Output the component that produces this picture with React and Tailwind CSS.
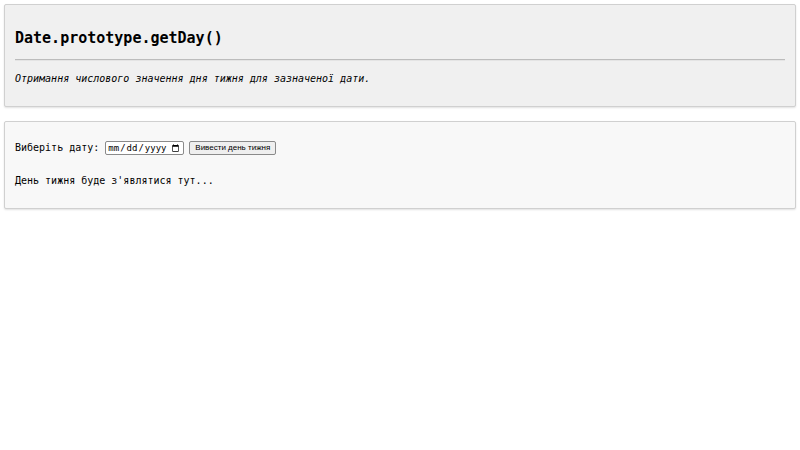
import React, { useState } from 'react';

const days = ['Неділя', 'Понеділок', 'Вівторок', 'Середа', 'Четвер', "П'ятниця", 'Субота'];

const App = () => {
	const [date, setDate] = useState('');
	const [result, setResult] = useState("День тижня буде з'являтися тут...");

	const showDay = () => {
		if (!date) return;
		const d = new Date(date);
		setResult(`День тижня: ${d.getDay()} (${days[d.getDay()]})`);
	};

	return (
		<div className="min-h-screen bg-white p-[4px] font-['DejaVu_Sans_Mono',monospace] text-[10px] text-black">
			<header className="bg-[#f0f0f0] border border-[#d0d0d0] rounded-[2px] shadow-[0_1px_2px_rgba(0,0,0,0.12)] px-[10px] pt-[10px] pb-[10px]">
				<h1 className="mt-[14px] text-[15px] leading-[18px] font-bold">
					Date.prototype.getDay()
				</h1>
				<hr className="mt-[12px] border-t border-[#bcbcbc] border-b border-b-[#e4e4e4]" />
				<p className="mt-[12px] mb-[11px] leading-[12px] italic">
					Отримання числового значення дня тижня для зазначеної дати.
				</p>
			</header>
			<main className="mt-[14px] bg-[#f8f8f8] border border-[#d0d0d0] rounded-[2px] shadow-[0_1px_2px_rgba(0,0,0,0.12)] px-[10px] pt-[10px] pb-[11px]">
				<div className="mt-[9px] flex items-center h-[14px]">
					<label htmlFor="date" className="leading-[12px]">
						Виберіть дату:
					</label>
					<input
						id="date"
						type="date"
						value={date}
						onChange={(e) => setDate(e.target.value)}
						className="ml-[6px] w-[79px] h-[14px] border border-[#8a8a8a] rounded-[2px] bg-white px-[1px] text-[9px] leading-[12px] font-['DejaVu_Sans_Mono',monospace]"
					/>
					<button
						type="button"
						onClick={showDay}
						className="ml-[5px] h-[14px] px-[5px] border border-[#8a8a8a] rounded-[2px] bg-[#efefef] text-[8px] leading-[12px] font-['Liberation_Sans',Arial,sans-serif]"
					>
						Вивести день тижня
					</button>
				</div>
				<p className="mt-[20px] mb-[10px] leading-[12px]">{result}</p>
			</main>
		</div>
	);
};

export default App;
